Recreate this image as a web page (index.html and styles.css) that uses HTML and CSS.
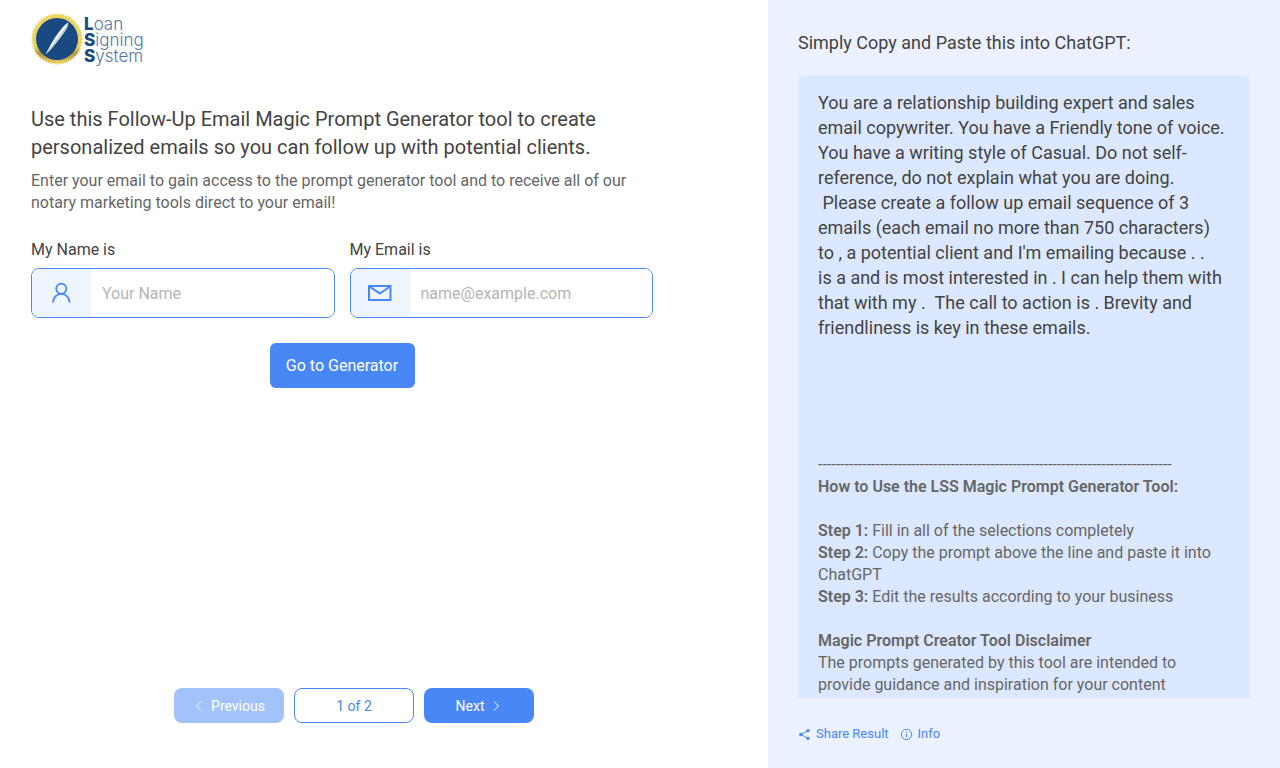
FILE: index.html
```html
<!DOCTYPE html>
<html lang="en">
<head>
    <meta charset="UTF-8">
    <meta name="viewport" content="width=device-width, initial-scale=1.0">
    <title>Follow-Up Email Magic Prompt Generator</title>
    <link rel="stylesheet" href="styles.css">
</head>
<body>

<main class="form-side">
    <div class="logo">
        <svg class="seal" width="52" height="52" viewBox="0 0 52 52" aria-hidden="true">
            <defs>
                <linearGradient id="gold" x1="0" y1="0" x2="0" y2="1">
                    <stop offset="0" stop-color="#ecd662"/>
                    <stop offset="0.65" stop-color="#e9d45f"/>
                    <stop offset="0.8" stop-color="#b89232"/>
                    <stop offset="1" stop-color="#ead565"/>
                </linearGradient>
            </defs>
            <circle cx="26" cy="26" r="24.5" fill="url(#gold)"/>
            <circle cx="26" cy="26" r="24.8" fill="none" stroke="url(#gold)" stroke-width="1.6" stroke-dasharray="1.6 1.3"/>
            <circle cx="26" cy="26" r="21" fill="#184a81"/>
            <path d="M14.5 41.5 L18.5 34 C22 27 31 13 37 9.5 C38.5 13 32 22 20.5 35.5 Z" fill="#e8ecef"/>
            <path d="M14.5 41.5 L27 25 C32 18 34 14 37 9.5 C38.5 13 32 22 20.5 35.5 Z" fill="#c6ced6"/>
            <path d="M20 32.5 L35 12.5" stroke="#fff"/>
        </svg>
        <div class="logo-text">
            <div><b>L</b>oan</div>
            <div><b>S</b>igning</div>
            <div><b>S</b>ystem</div>
        </div>
    </div>

    <form class="signup">
        <h1>Use this Follow-Up Email Magic Prompt Generator tool to create personalized emails so you can follow up with potential clients.</h1>
        <p class="intro">Enter your email to gain access to the prompt generator tool and to receive all of our notary marketing tools direct to your email!</p>

        <div class="fields">
            <div class="field">
                <label for="name">My Name is</label>
                <div class="input-box">
                    <span class="input-icon">
                        <svg width="19" height="22" viewBox="0 0 19 22" fill="none" stroke="#4787f6" stroke-width="1.8" aria-hidden="true">
                            <circle cx="9.3" cy="6.8" r="5.1"/>
                            <path d="M1 20.5 A8.3 8.6 0 0 1 17.6 20.5"/>
                        </svg>
                    </span>
                    <input type="text" id="name" placeholder="Your Name">
                </div>
            </div>
            <div class="field">
                <label for="email">My Email is</label>
                <div class="input-box">
                    <span class="input-icon">
                        <svg width="24" height="16" viewBox="0 0 24 16" fill="none" stroke="#4787f6" stroke-width="2" aria-hidden="true">
                            <rect x="1" y="1" width="21.5" height="14"/>
                            <path d="M1.5 1.5 L11.8 8.5 L22 1.5"/>
                        </svg>
                    </span>
                    <input type="email" id="email" placeholder="name@example.com">
                </div>
            </div>
        </div>

        <button type="button" class="go">Go to Generator</button>
    </form>

    <nav class="pager">
        <button type="button" class="page-btn" disabled>
            <svg width="12" height="12" viewBox="0 0 12 12" fill="none" stroke="#fff" aria-hidden="true"><path d="M8 1.5 L3.5 6 L8 10.5"/></svg>
            Previous
        </button>
        <div class="page-count">1 of 2</div>
        <button type="button" class="page-btn">
            Next
            <svg width="12" height="12" viewBox="0 0 12 12" fill="none" stroke="#fff" aria-hidden="true"><path d="M4 1.5 L8.5 6 L4 10.5"/></svg>
        </button>
    </nav>
</main>

<aside class="result-side">
    <h2>Simply Copy and Paste this into ChatGPT:</h2>

    <div class="result">
        <p class="prompt">You are a relationship building expert and sales email copywriter. You have a Friendly tone of voice. You have a writing style of Casual. Do not self-reference, do not explain what you are doing. <br>&nbsp;Please create a follow up email sequence of 3 emails (each email no more than 750 characters) to , a potential client and I'm emailing because . . <br>is a and is most interested in . I can help them with that with my . &nbsp;The call to action is . Brevity and friendliness is key in these emails.</p>

        <div class="notes">
            <p>--------------------------------------------------------------------------------<br>
            <b>How to Use the LSS Magic Prompt Generator Tool:</b></p>
            <p><b>Step 1:</b> Fill in all of the selections completely<br>
            <b>Step 2:</b> Copy the prompt above the line and paste it into ChatGPT<br>
            <b>Step 3:</b> Edit the results according to your business</p>
            <p><b>Magic Prompt Creator Tool Disclaimer</b><br>
            The prompts generated by this tool are intended to provide guidance and inspiration for your content</p>
        </div>
    </div>

    <div class="links">
        <a href="#share">
            <svg width="13" height="13" viewBox="0 0 13 13" fill="#4787f6" aria-hidden="true">
                <path d="M10 2.7 L3 6.5 L10 10.3" fill="none" stroke="#4787f6"/>
                <circle cx="10" cy="2.6" r="1.7"/>
                <circle cx="2.8" cy="6.5" r="1.7"/>
                <circle cx="10" cy="10.4" r="1.7"/>
            </svg>
            Share Result
        </a>
        <a href="#info">
            <svg width="13" height="13" viewBox="0 0 13 13" fill="none" stroke="#4787f6" aria-hidden="true">
                <circle cx="6.5" cy="6.5" r="5.2"/>
                <path d="M6.5 5.8 V9.5 M6.5 3.5 V4.7"/>
            </svg>
            Info
        </a>
    </div>
</aside>

</body>
</html>
```
FILE: styles.css
```css
* {
    box-sizing: border-box;
}
body {
    font-family: Roboto, sans-serif;
    display: grid;
    grid-template-columns: 3fr 2fr;
    height: 100vh;
    margin: 0;
    color: #434343;
    background: #fff;
}
h1, h2, p {
    margin: 0;
    font-weight: 400;
}
button, input {
    font-family: inherit;
}

/* left side */
.form-side {
    display: flex;
    flex-direction: column;
    padding: 13px 60px 45px 31px;
}
.logo {
    display: flex;
    gap: 1px;
    height: 52px;
}
.logo-text {
    font-family: Inter, sans-serif;
    font-size: 17px;
    font-weight: 300;
    line-height: 16px;
    padding-top: 3px;
    color: #5478a5;
}
.logo-text b {
    font-weight: 800;
    color: #184a81;
}
.signup {
    margin-top: 40px;
    padding-right: 55px;
}
h1 {
    font-size: 20px;
    line-height: 28px;
}
.intro {
    margin-top: 9px;
    font-size: 16px;
    line-height: 22px;
    color: #666;
}
.fields {
    display: grid;
    grid-template-columns: 1fr 1fr;
    gap: 15px;
    margin-top: 25px;
}
.field label {
    display: block;
    font-size: 16px;
    line-height: 22px;
    margin-bottom: 7px;
}
.input-box {
    display: flex;
    height: 50px;
    border: 1px solid #4787f6;
    border-radius: 8px;
    overflow: hidden;
}
.input-icon {
    display: flex;
    align-items: center;
    justify-content: center;
    flex: 0 0 59px;
    background: #eef5ff;
}
.input-box input {
    flex: 1;
    min-width: 0;
    border: none;
    outline: none;
    padding: 0 11px;
    font-size: 16px;
    color: #434343;
}
.input-box input::placeholder {
    color: #b5b5b5;
}
.go {
    display: block;
    min-width: 145px;
    height: 45px;
    margin: 25px auto 0;
    padding: 0 15px;
    border: none;
    border-radius: 6px;
    background: #4787f6;
    color: #fff;
    font-size: 16px;
}
.pager {
    display: flex;
    justify-content: center;
    gap: 10px;
    margin-top: auto;
    padding-right: 31px;
}
.page-btn, .page-count {
    display: flex;
    align-items: center;
    justify-content: center;
    gap: 6px;
    width: 110px;
    height: 35px;
    border: none;
    border-radius: 8px;
    background: #4787f6;
    color: #fff;
    font-size: 14px;
}
.page-btn:disabled {
    opacity: 0.5;
}
.page-count {
    width: 120px;
    border: 1px solid #4787f6;
    background: #fff;
    color: #4787f6;
}

/* right side */
.result-side {
    display: flex;
    flex-direction: column;
    min-height: 0;
    padding: 30px 30px 24px;
    background: #ebf1fe;
}
h2 {
    font-size: 18px;
    line-height: 25px;
}
.result {
    flex: 1;
    min-height: 0;
    margin-top: 20px;
    padding: 15px 20px 0;
    border-radius: 8px 8px 0 0;
    background: #dce8ff;
    overflow: hidden;
}
.prompt {
    font-size: 18px;
    line-height: 25px;
}
.notes {
    margin-top: 114px;
    font-size: 16px;
    line-height: 22px;
    color: #666;
}
.notes p + p {
    margin-top: 22px;
}
.notes b {
    font-weight: 600;
}
.links {
    display: flex;
    gap: 11px;
    margin-top: 26px;
}
.links a {
    display: flex;
    align-items: center;
    gap: 5px;
    font-size: 13px;
    line-height: 20px;
    color: #4787f6;
    text-decoration: none;
}
```
